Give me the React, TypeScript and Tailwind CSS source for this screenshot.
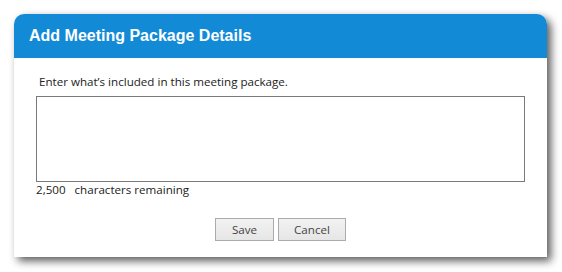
// Add Meeting Package Details dialog
export default function App() {
    return (
        <div className="h-[272px] w-[562px] bg-white pl-[14px] pt-[14px]">
            <div
                className="flex h-[243px] w-[533px] flex-col rounded-t-[10px] bg-white shadow-[4px_4px_8px_rgba(0,0,0,0.65)]"
            >
                {/* Header */}
                <div className="flex h-[44px] items-center rounded-t-[10px] bg-[#138ad6] pl-[15px]">
                    <h1 className="font-['Liberation_Sans',Arial,sans-serif] text-[16px] font-bold text-white">
                        Add Meeting Package Details
                    </h1>
                </div>

                {/* Body */}
                <div className="flex flex-col px-[22px] pt-[15px] font-['Open_Sans',sans-serif] text-[11.6px] text-[#222]">
                    <p className="pl-[3px] leading-[18px]">
                        Enter what&rsquo;s included in this meeting package.
                    </p>
                    <textarea
                        className="mt-[5px] h-[86px] w-[489px] resize-none border border-[#7a7a7a] bg-white outline-none"
                    />
                    <p className="leading-[16px]">
                        2,500&nbsp;&nbsp; characters remaining
                    </p>

                    <div className="mt-[20px] flex justify-center gap-[4px]">
                        <button className="h-[23px] w-[59px] border border-[#ababab] bg-gradient-to-b from-[#f2f2f2] to-[#e6e6e6] text-[11.6px] text-[#444]">
                            Save
                        </button>
                        <button className="h-[23px] w-[68px] border border-[#ababab] bg-gradient-to-b from-[#f2f2f2] to-[#e6e6e6] text-[11.6px] text-[#444]">
                            Cancel
                        </button>
                    </div>
                </div>
            </div>
        </div>
    );
}
